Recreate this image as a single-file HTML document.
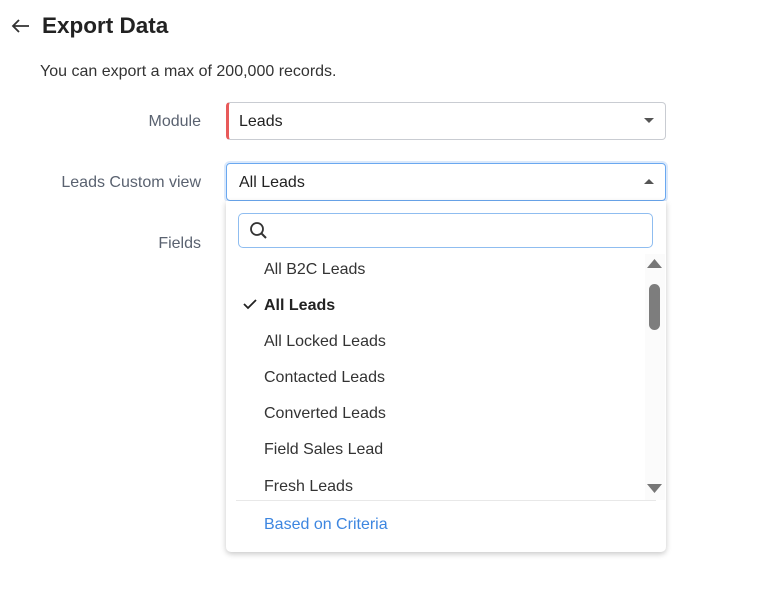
<!DOCTYPE html>
<html><head><meta charset="utf-8"><style>
*{box-sizing:border-box;margin:0;padding:0}
body{width:768px;height:611px;background:#fff;font-family:"Liberation Sans",sans-serif;position:relative;overflow:hidden;color:#222}
.a{position:absolute}
.lbl{position:absolute;right:567px;font-size:16px;color:#5a6270;white-space:nowrap}
.sel{position:absolute;left:226px;width:440px;height:38px;border:1px solid #c9ccd2;border-radius:4px;font-size:16px;padding:0 12px;line-height:37px;color:#222}
.item{position:absolute;left:264px;font-size:16px;color:#333}
</style></head><body>
<svg class="a" style="left:10px;top:17px" width="22" height="18" viewBox="0 0 22 18"><path d="M19 9H3M9 3L3 9l6 6" fill="none" stroke="#333" stroke-width="1.8"/></svg>
<div class="a" style="left:42px;top:13px;font-size:22.5px;font-weight:bold;color:#222">Export Data</div>
<div class="a" style="left:40px;top:63px;font-size:16px;color:#333">You can export a max of 200,000 records.</div>
<div class="lbl" style="top:113px">Module</div>
<div class="sel" style="top:102px;border-left:3px solid #e85a5a;padding-left:10px">Leads</div>
<svg class="a" style="left:644px;top:118px" width="10" height="6"><path d="M0 0h10L5 5z" fill="#555"/></svg>
<div class="lbl" style="top:174px">Leads Custom view</div>
<div class="sel" style="top:163px;border:1px solid #6aa8f0;box-shadow:0 0 0 2px #dbe9fb">All Leads</div>
<svg class="a" style="left:644px;top:178px" width="10" height="6"><path d="M0 6h10L5 1z" fill="#555"/></svg>
<div class="lbl" style="top:235px">Fields</div>
<div class="a" style="left:226px;top:201px;width:440px;height:351px;background:#fff;border-radius:0 0 5px 5px;box-shadow:0 2px 6px rgba(0,0,0,.22)"></div>
<div class="a" style="left:238px;top:213px;width:415px;height:35px;border:1px solid #8fbdf0;border-radius:5px"></div>
<svg class="a" style="left:249px;top:221px" width="20" height="20" viewBox="0 0 20 20"><circle cx="8" cy="8" r="6" fill="none" stroke="#333" stroke-width="1.8"/><path d="M12.5 12.5L17 17" stroke="#333" stroke-width="2"/></svg>
<div class="item" style="top:261px">All B2C Leads</div>
<svg class="a" style="left:243px;top:299px" width="14" height="11"><path d="M1 5l4 4 8-8" fill="none" stroke="#222" stroke-width="1.8"/></svg>
<div class="item" style="top:297px;font-weight:bold;color:#222">All Leads</div>
<div class="item" style="top:333px">All Locked Leads</div>
<div class="item" style="top:369px">Contacted Leads</div>
<div class="item" style="top:405px">Converted Leads</div>
<div class="item" style="top:441px">Field Sales Lead</div>
<div class="item" style="top:478px">Fresh Leads</div>
<div class="a" style="left:645px;top:254px;width:20px;height:246px;background:#fbfbfb"></div>
<svg class="a" style="left:647px;top:258px" width="15" height="10"><path d="M0 10h15L7.5 1z" fill="#777"/></svg>
<div class="a" style="left:649px;top:284px;width:11px;height:46px;border-radius:6px;background:#7d7d7d"></div>
<svg class="a" style="left:647px;top:484px" width="15" height="10"><path d="M0 0h15L7.5 9z" fill="#777"/></svg>
<div class="a" style="left:236px;top:500px;width:420px;height:1px;background:#e8e8e8"></div>
<div class="a" style="left:264px;top:516px;font-size:16px;color:#3d86e0">Based on Criteria</div>
</body></html>
